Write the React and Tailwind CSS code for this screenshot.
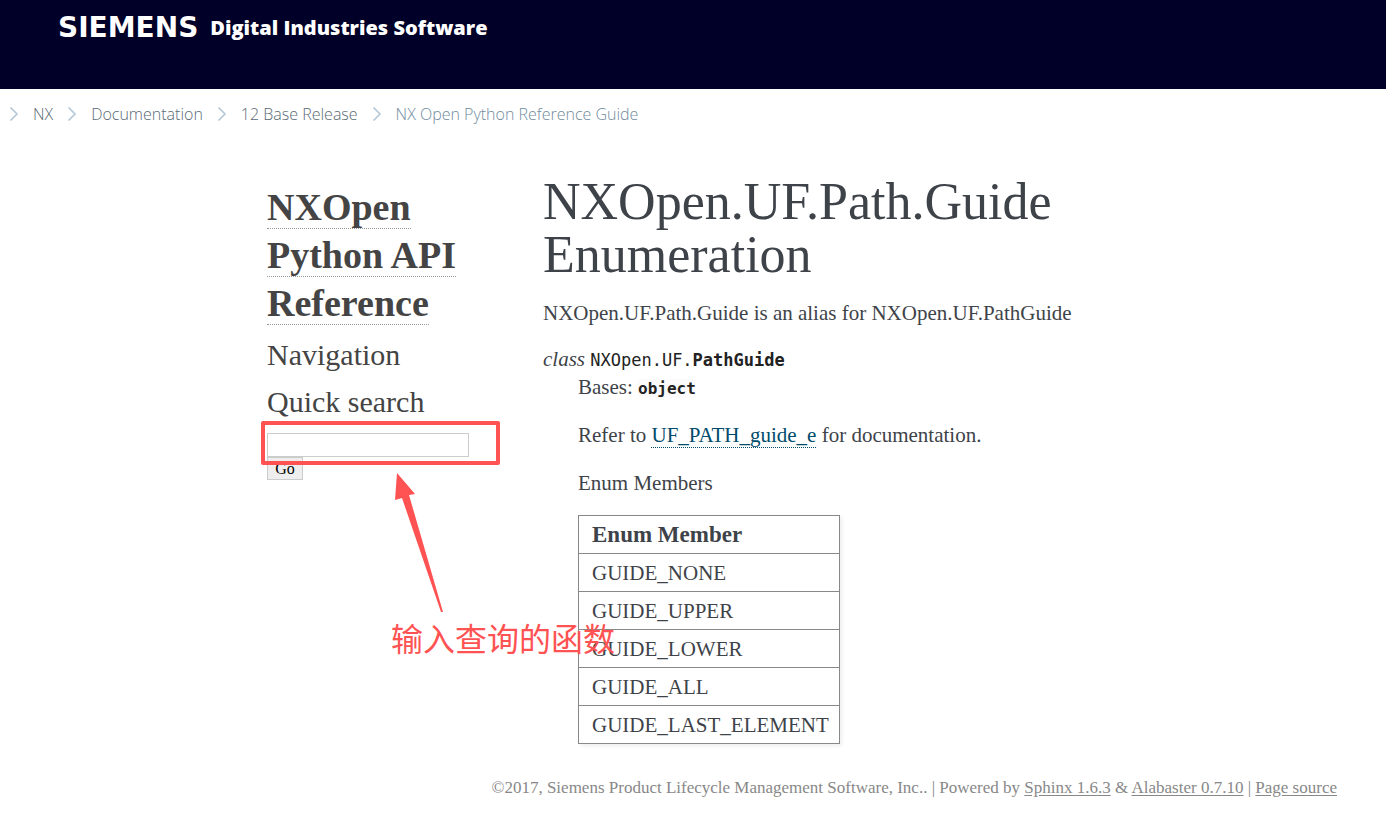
import React from "react";

const crumbs = ["NX", "Documentation", "12 Base Release", "NX Open Python Reference Guide"];

const members = ["GUIDE_NONE", "GUIDE_UPPER", "GUIDE_LOWER", "GUIDE_ALL", "GUIDE_LAST_ELEMENT"];

function Header() {
    return (
        <header className="flex h-[89px] items-start gap-3 bg-[#000028] pl-[58px] pt-2 text-white">
            <span className="text-[28px] leading-10 font-bold font-['DejaVu_Sans',sans-serif]">SIEMENS</span>
            <span className="text-[20px] leading-10 font-extrabold font-['Open_Sans',sans-serif]">Digital Industries Software</span>
        </header>
    );
}

function Breadcrumbs() {
    return (
        <nav aria-label="Breadcrumb" className="px-2 pt-3 font-['Open_Sans',sans-serif] text-[16px] leading-[26px] font-light">
            <ol className="flex flex-wrap gap-x-[13px]">
                {crumbs.map((label, i) => (
                    <li key={label} className="flex items-center gap-[13px]">
                        <svg width="12" height="14" viewBox="0 0 12 14" fill="none" stroke="#b4c8d7" strokeWidth="1.6" aria-hidden="true">
                            <path d="M2.5 0.5 L9 7 L2.5 13.5" />
                        </svg>
                        <a href="#" className={i === crumbs.length - 1 ? "text-[#708a9c]" : "text-[#5a6a74]"}>
                            {label}
                        </a>
                    </li>
                ))}
            </ol>
        </nav>
    );
}

// red marker, arrow and note laid over the search box
function SearchNote() {
    return (
        <>
            <div className="pointer-events-none absolute -top-3 -left-1.5 h-11 w-[239px] rounded-xs border-4 border-[#ff5252]" />
            <svg className="pointer-events-none absolute top-10 left-32 h-[140px] w-12" viewBox="0 0 48 140" fill="#ff5252" aria-hidden="true">
                <path d="M2 0 L20 21 L14 22 L48 139 L46 139 L7 25 L0 27 Z" />
            </svg>
            <p className="pointer-events-none absolute top-[180px] left-[124px] text-[32px] leading-12 whitespace-nowrap text-[#ff5252] font-['Noto_Sans_CJK_SC',sans-serif]">
                输入查询的函数
            </p>
        </>
    );
}

function Sidebar() {
    return (
        <aside className="w-[276px] shrink-0 pt-2 text-[#444]">
            <h1 className="w-52 text-[38px] leading-12 font-bold">
                <a href="#" className="border-b border-dotted border-[#999]">
                    NXOpen Python API Reference
                </a>
            </h1>
            <h3 className="mt-1 text-[30px] leading-[47px]">Navigation</h3>
            <h3 className="text-[30px] leading-[47px]">
                <label htmlFor="q">Quick search</label>
            </h3>
            <form className="relative mt-2 flex flex-col items-start" onSubmit={(e) => e.preventDefault()}>
                <input id="q" type="text" name="q" className="h-6 w-[202px] border border-[#ccc] bg-white px-1 text-[16px]" />
                <button type="submit" className="h-[23px] w-9 border border-[#ccc] bg-[#eee] text-[16px] leading-5 text-black">
                    Go
                </button>
                <SearchNote />
            </form>
        </aside>
    );
}

function Content() {
    return (
        <main className="min-w-0 flex-1 text-[21px] leading-7 text-[#3e4349]">
            <h1 className="text-[52px] leading-[53px]">NXOpen.UF.Path.Guide Enumeration</h1>
            <p className="mt-[18px]">NXOpen.UF.Path.Guide is an alias for NXOpen.UF.PathGuide</p>
            <dl className="mt-[18px]">
                <dt>
                    <em>class</em>{" "}
                    <code className="font-['DejaVu_Sans_Mono',monospace] text-[17px] leading-none text-[#222]">
                        NXOpen.UF.<b>PathGuide</b>
                    </code>
                </dt>
                <dd className="pl-[35px]">
                    <p>
                        Bases:{" "}
                        <code className="bg-[#fbfbfb] font-['DejaVu_Sans_Mono',monospace] text-[16px] leading-none font-bold text-[#222]">object</code>
                    </p>
                    <p className="mt-5">
                        Refer to{" "}
                        <a href="#" className="border-b border-dotted border-[#004b6b] text-[#004b6b]">UF_PATH_guide_e</a>{" "}
                        for documentation.
                    </p>
                    <p className="mt-5">Enum Members</p>
                    <table className="mt-[18px] border-collapse border border-[#888] shadow-[2px_2px_4px_#eee]">
                        <thead>
                            <tr>
                                <th className="h-[38px] border border-[#888] pr-2.5 pl-[13px] text-left text-[23px] font-bold">Enum Member</th>
                            </tr>
                        </thead>
                        <tbody>
                            {members.map((name) => (
                                <tr key={name}>
                                    <td className="h-[38px] border border-[#888] pr-2.5 pl-[13px]">{name}</td>
                                </tr>
                            ))}
                        </tbody>
                    </table>
                </dd>
            </dl>
        </main>
    );
}

function Footer() {
    const link = "underline underline-offset-2";

    return (
        <footer className="mt-8 pr-[49px] pb-8 text-right text-[17px] leading-6 text-[#888]">
            ©2017, Siemens Product Lifecycle Management Software, Inc.. | Powered by{" "}
            <a href="#" className={link}>Sphinx 1.6.3</a> &amp; <a href="#" className={link}>Alabaster 0.7.10</a> |{" "}
            <a href="#" className={link}>Page source</a>
        </footer>
    );
}

export default function App() {
    return (
        <div className="min-h-screen bg-white font-['Liberation_Serif',serif]">
            <Header />
            <Breadcrumbs />
            <div className="mx-auto mt-12 flex max-w-[852px]">
                <Sidebar />
                <Content />
            </div>
            <Footer />
        </div>
    );
}
